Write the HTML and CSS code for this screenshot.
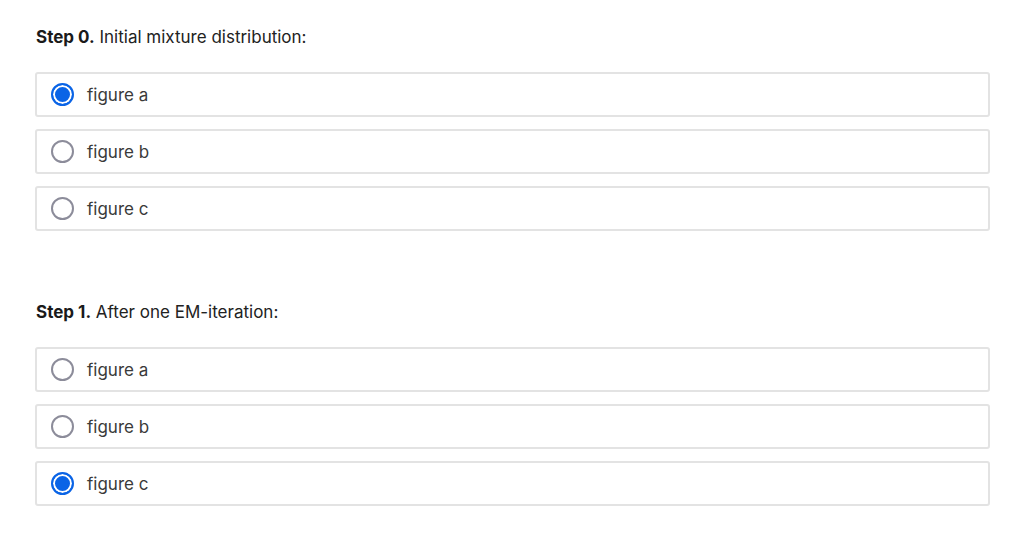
FILE: index.html
```html
<!DOCTYPE html>
<html lang="en">
<head>
  <meta charset="UTF-8" />
  <meta name="viewport" content="width=device-width, initial-scale=1.0"/>
  <title>EM Steps</title>
  <link rel="stylesheet" href="styles.css">
</head>
<body>
  <div class="quiz">
    <div class="question">
      <p class="prompt"><strong>Step 0.</strong> Initial mixture distribution:</p>
      <div class="options">
        <label class="option"><input type="radio" name="step0" checked><span>figure a</span></label>
        <label class="option"><input type="radio" name="step0"><span>figure b</span></label>
        <label class="option"><input type="radio" name="step0"><span>figure c</span></label>
      </div>
    </div>

    <div class="question">
      <p class="prompt"><strong>Step 1.</strong> After one EM-iteration:</p>
      <div class="options">
        <label class="option"><input type="radio" name="step1"><span>figure a</span></label>
        <label class="option"><input type="radio" name="step1"><span>figure b</span></label>
        <label class="option"><input type="radio" name="step1" checked><span>figure c</span></label>
      </div>
    </div>
  </div>
</body>
</html>
```

FILE: styles.css
```css
* {
  box-sizing: border-box;
  font-family: Inter, 'Liberation Sans', sans-serif;
}

body {
  margin: 0;
  padding: 0;
  background: #fff;
  color: #2d2d2d;
}

.quiz {
  width: 955px;
  margin-left: 35px;
  padding-top: 25px;
}

.question + .question {
  margin-top: 69px;
}

.prompt {
  margin: 0 0 23px 1px;
  font-size: 17px;
  line-height: 24px;
  color: #222;
}

.prompt strong {
  font-weight: 700;
  color: #1a1a1a;
}

.options {
  display: flex;
  flex-direction: column;
  gap: 12px;
}

.option {
  display: flex;
  align-items: center;
  gap: 13px;
  height: 45px;
  padding: 0 14px;
  border: 2px solid #e3e3e3;
  border-radius: 3px;
  font-size: 17px;
  color: #3a3a3a;
  cursor: pointer;
}

.option input {
  appearance: none;
  -webkit-appearance: none;
  margin: 0;
  width: 23px;
  height: 23px;
  border: 2px solid #8c8c9a;
  border-radius: 50%;
  background: #fff;
  flex-shrink: 0;
}

.option input:checked {
  border-color: #0a64e6;
  background: #0a64e6;
  box-shadow: inset 0 0 0 2px #fff;
}
```
